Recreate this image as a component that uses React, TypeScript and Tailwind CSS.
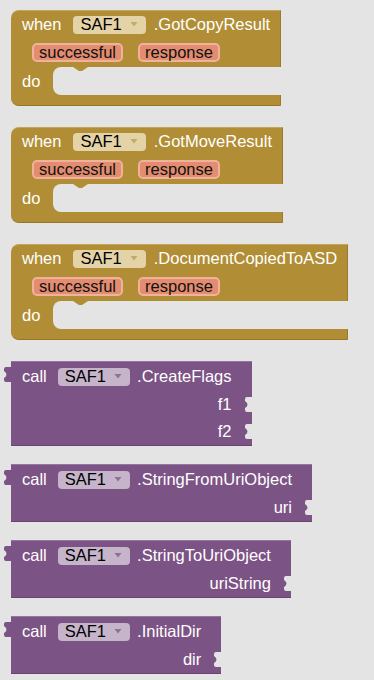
import React from "react";

interface CallBlockProps {
  name: string;
  inputs: string[];
}

const Arrow = ({ purple }: { purple?: boolean }) => (
  <svg width="8" height="5" viewBox="0 0 8 5" className="ml-[8px]">
    <path d="M0.5 0 H7.5 L4 4.5 Z" fill={purple ? "#8e7296" : "#c4aa66"} />
  </svg>
);

const Field = ({ purple }: { purple?: boolean }) => (
  <div
    className={
      purple
        ? "flex items-center h-[18px] pl-[7px] pr-[8px] rounded-[4px] bg-[#c5b4ca] text-black"
        : "flex items-center h-[18px] pl-[7px] pr-[8px] rounded-[4px] bg-[#e3d3a7] text-black"
    }
  >
    <span>SAF1</span>
    <Arrow purple={purple} />
  </div>
);

const Param = ({ label }: { label: string }) => (
  <div className="flex items-center h-[19px] px-[5px] rounded-[5px] border-2 border-[#efb29d] bg-[#e38c6f] text-[#111]">
    {label}
  </div>
);

// выступ слева у блока call и гнездо справа у входов
const Tab = ({ fill }: { fill: string }) => (
  <svg width="9" height="15" viewBox="0 0 9 15">
    <path
      d="M9 0 H3 Q1 0 1 2 V4 Q3.5 5.5 3.5 7.5 Q3.5 9.5 1 11 V13 Q1 15 3 15 H9 Z"
      fill={fill}
    />
  </svg>
);

const EventBlock = ({ name }: { name: string }) => (
  <div className="flex flex-col w-fit">
    <div className="bg-[#b18e35] rounded-tl-[8px] border-t border-[#c4a55a] border-r border-r-[#9a7a2c]">
      <div className="flex items-center h-[27px] pl-[11px] pr-[10px] text-white">
        <span>when</span>
        <div className="ml-[12px]">
          <Field />
        </div>
        <span className="ml-[8px]">{name}</span>
      </div>
      <div className="flex items-center gap-[15px] h-[29px] pl-[21px]">
        <Param label="successful" />
        <Param label="response" />
      </div>
    </div>
    <div className="flex h-[28px] bg-[#b18e35]">
      <div className="w-[42px] flex items-center pl-[11px] text-white">do</div>
      <div className="relative flex-1 bg-[#e4e4e4] rounded-l-[8px]">
        <svg
          width="15"
          height="4"
          viewBox="0 0 15 4"
          className="absolute top-0 left-[20px]"
        >
          <path d="M0 0 L6 4 H9 L15 0 Z" fill="#b18e35" />
        </svg>
      </div>
    </div>
    <div className="h-[11px] bg-[#b18e35] rounded-bl-[8px] border-b border-[#957629] border-r border-r-[#9a7a2c]"></div>
  </div>
);

const CallBlock = ({ name, inputs }: CallBlockProps) => (
  <div className="relative flex flex-col w-fit bg-[#7c5385] border-t border-[#9475a0] border-b border-b-[#68446f]">
    <div className="absolute left-[-8px] top-[5px]">
      <Tab fill="#7c5385" />
    </div>
    <div className="flex items-center h-[29px] pl-[11px] pr-[20px] text-white">
      <span>call</span>
      <div className="ml-[11px]">
        <Field purple />
      </div>
      <span className="ml-[7px]">{name}</span>
    </div>
    {inputs.map((item, index) => (
      <div
        key={index}
        className="relative flex items-center justify-end h-[27px] pr-[20px] text-white"
      >
        {item}
        <div className="absolute right-[-1px] top-[6px]">
          <Tab fill="#e4e4e4" />
        </div>
      </div>
    ))}
  </div>
);

const App = () => {
  return (
    <div className="min-h-[680px] w-[374px] bg-[#e4e4e4] pt-[10px] pl-[11px] font-['Liberation_Sans',Arial,sans-serif] text-[16.5px] leading-none">
      <div className="flex flex-col">
        <EventBlock name=".GotCopyResult" />
        <div className="mt-[21px]">
          <EventBlock name=".GotMoveResult" />
        </div>
        <div className="mt-[21px]">
          <EventBlock name=".DocumentCopiedToASD" />
        </div>
        <div className="mt-[21px]">
          <CallBlock name=".CreateFlags" inputs={["f1", "f2"]} />
        </div>
        <div className="mt-[18px]">
          <CallBlock name=".StringFromUriObject" inputs={["uri"]} />
        </div>
        <div className="mt-[18px]">
          <CallBlock name=".StringToUriObject" inputs={["uriString"]} />
        </div>
        <div className="mt-[18px]">
          <CallBlock name=".InitialDir" inputs={["dir"]} />
        </div>
      </div>
    </div>
  );
};

export default App;
